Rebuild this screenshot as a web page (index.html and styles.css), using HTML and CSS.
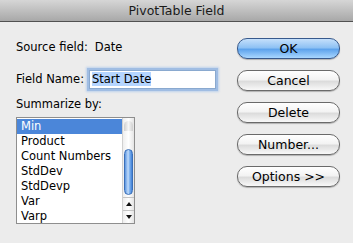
FILE: index.html
```html
<!DOCTYPE html>
<html lang="en">
<head>
    <meta charset="UTF-8">
    <title>PivotTable Field</title>
    <link rel="stylesheet" href="styles.css">
</head>
<body>
    <div class="dialog">
        <div class="titlebar">PivotTable Field</div>
        <div class="body">
            <div class="left">
                <div class="row source">
                    <span class="label">Source field:</span>
                    <span class="value">Date</span>
                </div>
                <div class="row name">
                    <span class="label">Field Name:</span>
                    <div class="field"><span class="sel">Start Date</span></div>
                </div>
                <div class="row summ">Summarize by:</div>
                <div class="listbox">
                    <div class="items">
                        <div class="item active">Min</div>
                        <div class="item">Product</div>
                        <div class="item">Count Numbers</div>
                        <div class="item">StdDev</div>
                        <div class="item">StdDevp</div>
                        <div class="item">Var</div>
                        <div class="item">Varp</div>
                    </div>
                    <div class="scroll">
                        <div class="track">
                            <div class="cap"></div>
                            <div class="thumb"></div>
                        </div>
                        <div class="arrow up"></div>
                        <div class="arrow down"></div>
                    </div>
                </div>
            </div>
            <div class="buttons">
                <div class="btn default">OK</div>
                <div class="btn">Cancel</div>
                <div class="btn">Delete</div>
                <div class="btn">Number...</div>
                <div class="btn">Options &gt;&gt;</div>
            </div>
        </div>
    </div>
</body>
</html>
```

FILE: styles.css
```css
body { margin: 0; font-family: "DejaVu Sans", sans-serif; font-size: 11.5px; color: #000; }
.dialog { width: 353px; height: 243px; background: #ececec; overflow: hidden; }
.titlebar { height: 21px; line-height: 22px; text-align: center; font-size: 12.5px; color: #1a1a1a;
    background: linear-gradient(#d6d6d6, #a8a8a8); border-bottom: 1px solid #515151; }
.body { display: flex; }
.left { width: 221px; padding-left: 16px; }
.row { display: flex; align-items: center; }
.source { margin-top: 17px; height: 16px; }
.source .value { margin-left: 7px; }
.name { margin-top: 12px; height: 24px; }
.field { margin-left: 5px; width: 123px; height: 17px; background: #fff; border: 1px solid #8aa9cf;
    box-shadow: 0 0 0 2px #a0bde3, 0 0 2px 3px #bed2ec; display: flex; align-items: center; padding-left: 2px; }
.sel { background: #b5d5ff; line-height: 14px; }
.summ { margin-top: 5px; height: 16px; }
.listbox { margin-top: 5px; width: 117px; height: 105px; border: 1px solid #8e8e8e; background: #fff; display: flex; }
.items { flex: 1; padding-top: 1px; }
.item { height: 15px; line-height: 15px; padding-left: 4px; }
.item.active { background: #4b86d9; color: #fff; }
.scroll { width: 11px; border-left: 1px solid #d0d0d0; display: flex; flex-direction: column;
    background: linear-gradient(90deg, #eee, #fff 50%, #e4e4e4); }
.track { flex: 1; }
.cap { margin: 3px 1px 0; height: 10px; border-radius: 5px 5px 0 0; background: linear-gradient(90deg, #cfcfcf, #f6f6f6 50%, #cfcfcf); }
.thumb { margin: 18px 1px 0; height: 44px; border-radius: 5px; border: 1px solid #3a6fb8;
    background: linear-gradient(90deg, #5b95e0, #c2dcfa 45%, #8cbcf2 60%, #3f80d8); }
.arrow { height: 12px; border-top: 1px solid #c4c4c4; position: relative; }
.arrow::after { content: ""; position: absolute; left: 3px; border-left: 3px solid transparent; border-right: 3px solid transparent; }
.arrow.up::after { top: 4px; border-bottom: 4px solid #111; }
.arrow.down::after { top: 4px; border-top: 4px solid #111; }
.buttons { display: flex; flex-direction: column; gap: 11px; padding-top: 16px; }
.btn { width: 101px; height: 19px; line-height: 19px; text-align: center; font-size: 12.5px; border: 1px solid #6a6a6a;
    border-radius: 10px; background: linear-gradient(#fff, #f3f3f3 45%, #dcdcdc 55%, #f8f8f8);
    box-shadow: 0 1px 1px rgba(0,0,0,0.25); }
.btn.default { border-color: #37598c; background: linear-gradient(#c5e0fb, #8fc2f4 45%, #5ea3ec 55%, #a9d7ff); }
```
